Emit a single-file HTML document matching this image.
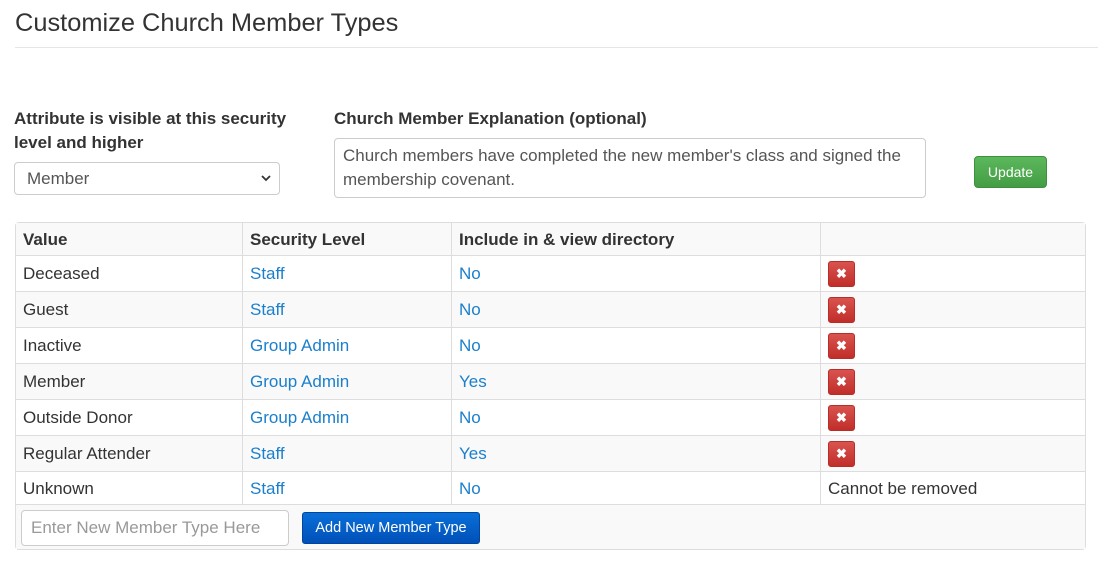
<!DOCTYPE html>
<html><head><style>
*{box-sizing:border-box}
body{margin:0;width:1098px;height:563px;background:#fff;font-family:"Liberation Sans",Arial,sans-serif;color:#333;font-size:17px;position:relative;overflow:hidden}
.a{position:absolute}
h1{position:absolute;left:15px;top:8px;margin:0;font-size:25.4px;font-weight:normal;line-height:30px}
.hr{position:absolute;left:15px;right:0;top:47px;border-top:1px solid #e5e5e5}
.lbl{font-weight:bold;line-height:24px}
.sel{left:14px;top:162px;width:266px;height:33px;border:1px solid #ccc;border-radius:4px;padding:6px 12px;color:#555;line-height:19px}
.ta{left:334px;top:138px;width:592px;height:60px;border:1px solid #ccc;border-radius:4px;padding:5px 8px;color:#555;line-height:24px}
.upd{left:974px;top:156px;width:73px;height:32px;background:linear-gradient(#5cb85c,#449d44);border:1px solid #3e8f3e;border-radius:4px;color:#fff;font-size:14px;text-align:center;line-height:30px}
table{position:absolute;left:15px;top:222px;width:1071px;border-collapse:separate;border-spacing:0;border:1px solid #ddd;border-radius:4px}
td,th{border-right:1px solid #ddd;border-bottom:1px solid #ddd;text-align:left;padding:0 7px;height:36px;vertical-align:middle;line-height:19px}
td:last-child,th:last-child{border-right:none}
th{height:33px;background:#f9f9f9}
tr.g td{background:#f9f9f9}
tr.u td{height:33px}
a{color:#1b7fcc;text-decoration:none}
.x{display:inline-block;width:27px;height:26px;border-radius:3px;background:linear-gradient(#d9534f,#c12e2a);border:1px solid #b92c28;color:#fff;font-size:13px;font-weight:bold;text-align:center;line-height:23px;vertical-align:middle}
</style></head><body>
<h1>Customize Church Member Types</h1>
<div class="hr"></div>
<div class="a lbl" style="left:14px;top:107px;width:300px">Attribute is visible at this security level and higher</div>
<div class="a sel">Member<svg style="position:absolute;right:8px;top:12px" width="10" height="7" viewBox="0 0 10 7"><path d="M1 1l4 4 4-4" fill="none" stroke="#333" stroke-width="1.8"/></svg></div>
<div class="a lbl" style="left:334px;top:107px">Church Member Explanation (optional)</div>
<div class="a ta">Church members have completed the new member's class and signed the membership covenant.</div>
<div class="a upd">Update</div>
<table>
<tr><th style="width:227px">Value</th><th style="width:209px">Security Level</th><th style="width:369px">Include in &amp; view directory</th><th></th></tr>
<tr><td>Deceased</td><td><a>Staff</a></td><td><a>No</a></td><td><span class="x">✖</span></td></tr>
<tr class="g"><td>Guest</td><td><a>Staff</a></td><td><a>No</a></td><td><span class="x">✖</span></td></tr>
<tr><td>Inactive</td><td><a>Group Admin</a></td><td><a>No</a></td><td><span class="x">✖</span></td></tr>
<tr class="g"><td>Member</td><td><a>Group Admin</a></td><td><a>Yes</a></td><td><span class="x">✖</span></td></tr>
<tr><td>Outside Donor</td><td><a>Group Admin</a></td><td><a>No</a></td><td><span class="x">✖</span></td></tr>
<tr class="g"><td>Regular Attender</td><td><a>Staff</a></td><td><a>Yes</a></td><td><span class="x">✖</span></td></tr>
<tr class="u"><td>Unknown</td><td><a>Staff</a></td><td><a>No</a></td><td>Cannot be removed</td></tr>
<tr class="g"><td colspan="4" style="height:44px;border-bottom:none;position:relative">
<span style="position:absolute;left:5px;top:5px;width:268px;height:36px;border:1px solid #ccc;border-radius:4px;background:#fff;color:#999;padding:0 9px;line-height:34px">Enter New Member Type Here</span>
<span style="position:absolute;left:286px;top:7px;width:178px;height:32px;border-radius:3px;background:linear-gradient(#0a6fd8,#0050b8);border:1px solid #0046a0;color:#fff;font-size:14.5px;text-align:center;line-height:30px">Add New Member Type</span>
</td></tr>
</table>
</body></html>
